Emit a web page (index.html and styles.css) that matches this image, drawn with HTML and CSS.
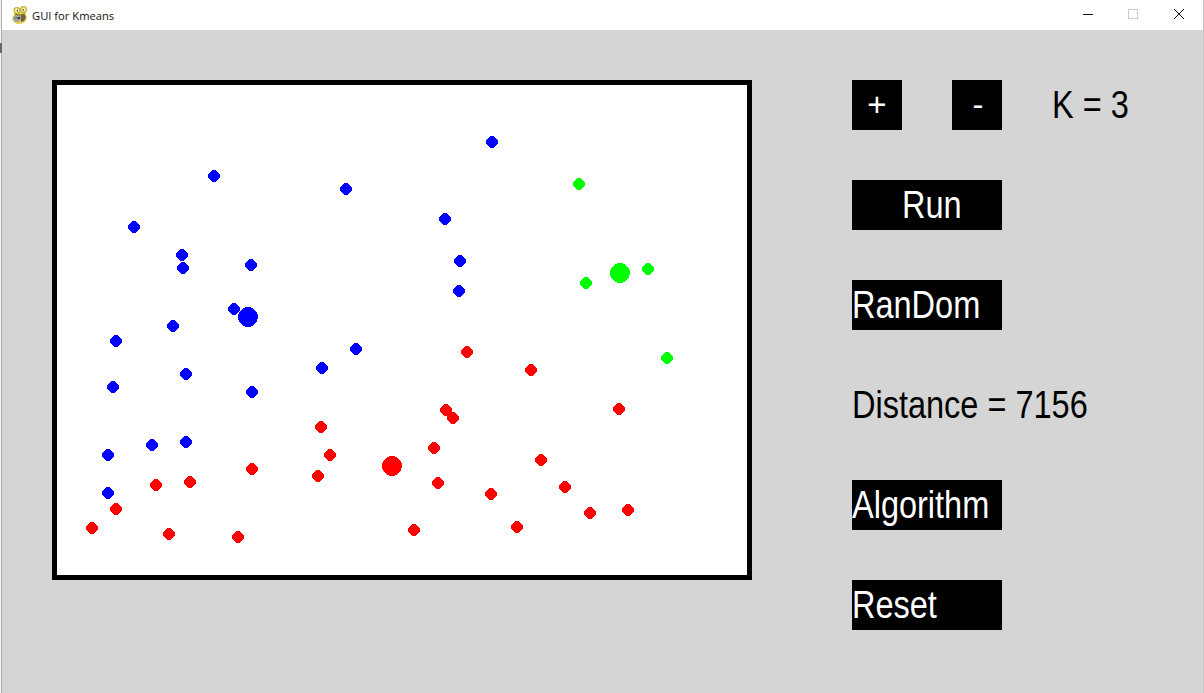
FILE: index.html
```html
<!DOCTYPE html>
<html lang="en">
<head>
<meta charset="utf-8">
<title>GUI for Kmeans</title>
<link rel="stylesheet" href="styles.css">
</head>
<body>
<div class="window">
  <header class="titlebar">
    <svg class="app-icon" width="16" height="18" viewBox="0 0 16 18">
      <path d="M2 8c1-2 3-2 6-2s5 0 6 2l1 4-2 4-4 2H5l-3-2-2-3z" fill="#e8d44d"/>
      <path d="M1 10l5-1 3 1v4l-2 2H3l-2-2z" fill="#a5a59c"/>
      <path d="M9 9l4 0 1 3-2 3-3 1z" fill="#75604c"/>
      <path d="M6 11h2v2H6z" fill="#3a3a3a"/>
      <path d="M3 12h3" stroke="#555" stroke-width="1"/>
      <circle cx="5" cy="4.500" r="3.200" fill="#e8d44d" stroke="#a08c20" stroke-width=".6"/>
      <circle cx="11.500" cy="3.500" r="3.200" fill="#e8d44d" stroke="#a08c20" stroke-width=".6"/>
      <circle cx="5" cy="4.500" r="1.600" fill="#fff"/>
      <circle cx="11.500" cy="3.500" r="1.600" fill="#fff"/>
      <circle cx="5.300" cy="4.800" r=".8" fill="#222"/>
      <circle cx="11.200" cy="3.800" r=".8" fill="#222"/>
      <path d="M3 8.300c3 1 7 1 10-.5" fill="none" stroke="#6b6226" stroke-width="1"/>
    </svg>
    <span class="title">GUI for Kmeans</span>
    <div class="win-controls">
      <svg class="win-btn" width="46" height="30" viewBox="0 0 46 30"><path d="M19 14.500h10" stroke="#111" stroke-width="1"/></svg>
      <svg class="win-btn" width="46" height="30" viewBox="0 0 46 30"><rect x="18.500" y="9.500" width="9" height="9" fill="none" stroke="#ccc"/></svg>
      <svg class="win-btn" width="46" height="30" viewBox="0 0 46 30"><path d="M18 9l10 10M28 9l-10 10" stroke="#111" stroke-width="1"/></svg>
    </div>
  </header>
  <main class="client">
    <div class="board">
      <svg id="plot" class="plot" width="690" height="490" viewBox="57 85 690 490"></svg>
    </div>
    <div class="panel">
      <div class="row">
        <button class="btn btn-small">+</button>
        <button class="btn btn-small btn-minus">-</button>
        <span class="label">K = 3</span>
      </div>
      <div class="row"><button class="btn btn-wide btn-run"><span class="squeeze">Run</span></button></div>
      <div class="row"><button class="btn btn-wide"><span class="squeeze">RanDom</span></button></div>
      <div class="row"><span class="label label-distance">Distance = 7156</span></div>
      <div class="row"><button class="btn btn-wide"><span class="squeeze">Algorithm</span></button></div>
      <div class="row"><button class="btn btn-wide"><span class="squeeze">Reset</span></button></div>
    </div>
  </main>
</div>
<script src="plot.js"></script>
</body>
</html>
```
FILE: styles.css
```css
* { box-sizing: border-box; }
html, body { margin: 0; padding: 0; height: 100%; background: #d5d5d5; overflow: hidden; }
.window { position: relative; width: 1204px; height: 693px; display: flex; flex-direction: column; font-family: "Liberation Sans", Arial, sans-serif; border-left: 1px solid #f2f2f2; border-right: 1px solid #c4c4c4; }
.window::before { content: ""; position: absolute; left: -1px; top: 43px; width: 2px; height: 10px; background: #666; }
.titlebar { height: 30px; flex: none; background: #fff; display: flex; align-items: center; padding-left: 10px; border-left: 1px solid #b0b0b0; }
.app-icon { flex: none; margin-right: 4px; }
.title { font-family: "Open Sans", "Noto Sans", sans-serif; font-size: 11.200px; color: #111; }
.win-controls { margin-left: auto; display: flex; margin-right: 1px; }
.win-btn { display: block; width: 46px; height: 30px; }
.client { flex: 1; display: flex; align-items: flex-start; padding: 50px 0 0 50px; border-left: 1px solid #b0b0b0; }
.board { width: 700px; height: 500px; flex: none; border: 5px solid #000; background: #fff; }
.plot { display: block; }
.panel { margin-left: 100px; display: flex; flex-direction: column; gap: 50px; }
.row { height: 50px; display: flex; align-items: center; gap: 50px; }
.btn { border: 0; margin: 0; height: 50px; background: #000; color: #fff; font-family: "Liberation Sans", Arial, sans-serif; padding: 0; display: block; text-align: left; }
.btn-small { width: 50px; font-size: 33px; text-align: center; line-height: 50px; }
.btn-minus { padding-left: 2px; }
.btn-wide { width: 150px; font-size: 38px; padding-left: 0; line-height: 50px; }
.btn-run { padding-left: 50px; }
.squeeze, .label { display: inline-block; transform: scaleX(.855); transform-origin: 0 50%; white-space: nowrap; }
.label { font-size: 38px; color: #000; line-height: 50px; }
```
FILE: plot.js
```js
var groups = [
  { color: "#0000ff", c: [248, 317], pts: [[492,142],[214,176],[346,189],[445,219],[134,227],[182,255],[183,268],[251,265],[460,261],[459,291],[234,309],[173,326],[116,341],[356,349],[322,368],[186,374],[113,387],[252,392],[186,442],[152,445],[108,455],[108,493]] },
  { color: "#00ff00", c: [620, 273], pts: [[579,184],[586,283],[648,269],[667,358]] },
  { color: "#ff0000", c: [392, 466], pts: [[467,352],[531,370],[619,409],[446,410],[453,418],[321,427],[434,448],[330,455],[541,460],[252,469],[318,476],[438,483],[190,482],[156,485],[565,487],[491,494],[116,509],[590,513],[628,510],[517,527],[414,530],[92,528],[169,534],[238,537]] }
];
var svg = document.getElementById("plot");
var NS = "http://www.w3.org/2000/svg";
var OCT = [[-1.5,-6],[1.5,-6],[6,-1.5],[6,1.5],[1.5,6],[-1.5,6],[-6,1.5],[-6,-1.5]];
function smallDot(x, y, color) {
  var el = document.createElementNS(NS, "polygon");
  el.setAttribute("points", OCT.map(function (o) { return (x + o[0]) + "," + (y + o[1]); }).join(" "));
  el.setAttribute("fill", color);
  el.setAttribute("shape-rendering", "crispEdges");
  svg.appendChild(el);
}
function bigDot(x, y, color) {
  var el = document.createElementNS(NS, "circle");
  el.setAttribute("cx", x);
  el.setAttribute("cy", y);
  el.setAttribute("r", 10);
  el.setAttribute("fill", color);
  el.setAttribute("shape-rendering", "crispEdges");
  svg.appendChild(el);
}
groups.forEach(function (g) {
  g.pts.forEach(function (p) { smallDot(p[0], p[1], g.color); });
  bigDot(g.c[0], g.c[1], g.color);
});
```
